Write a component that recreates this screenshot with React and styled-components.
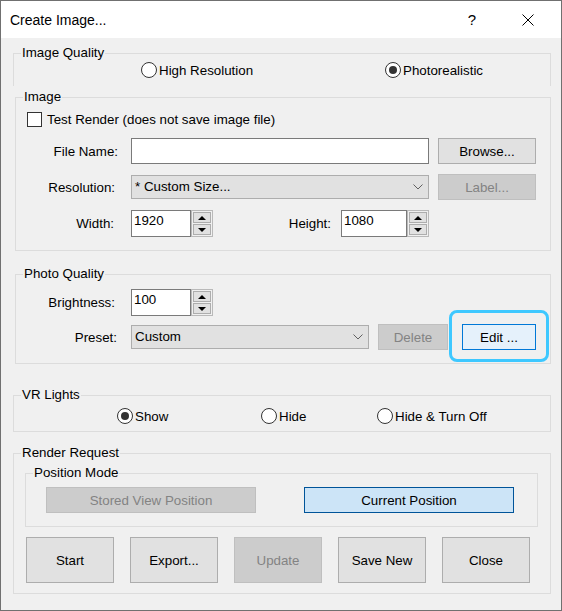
import React from 'react';
import styled, { createGlobalStyle, css } from 'styled-components';

const GlobalStyle = createGlobalStyle`
  html, body { margin: 0; padding: 0; background: #ffffff; }
  body {
    font-family: "Liberation Sans", Arial, sans-serif;
    font-size: 13.33px;
    color: #000;
  }
  * { box-sizing: border-box; }
`;

const Window = styled.div`
  width: 562px;
  height: 611px;
  border: 1px solid #707070;
  background: #f0f0f0;
  display: flex;
  flex-direction: column;
  overflow: hidden;
`;

const TitleBar = styled.div`
  height: 37px;
  flex: none;
  background: #ffffff;
  display: flex;
  align-items: center;
  padding: 0 10px 0 9px;
`;

const Title = styled.div`
  flex: 1;
  font-size: 14px;
  padding-top: 1px;
`;

const CaptionButton = styled.div`
  width: 46px;
  height: 36px;
  display: flex;
  align-items: center;
  justify-content: center;
  font-size: 15px;
  margin-left: ${p => p.$ml || 0}px;
`;

const Body = styled.div`
  flex: 1;
  display: flex;
  flex-direction: column;
  padding: 0 10px 0 12px;
`;

const Group = styled.fieldset`
  margin: ${p => p.$mt || 0}px 0 0 ${p => p.$ml || 0}px;
  padding: 0;
  min-width: 0;
  border: 1px solid #dcdcdc;
  ${p => p.$open && css`border-bottom: none;`}
`;

const Legend = styled.legend`
  margin-left: 7px;
  padding: 0 1px;
  height: 16px;
  line-height: 16px;
`;

const GroupContent = styled.div`
  display: flex;
  flex-direction: column;
  gap: ${p => p.$gap || 0}px;
  padding: ${p => p.$pad};
`;

const Row = styled.div`
  display: flex;
  align-items: center;
  height: ${p => p.$h}px;
  padding-left: ${p => p.$pl || 0}px;
`;

const FieldLabel = styled.div`
  flex: none;
  width: ${p => p.$w || 115}px;
  padding-right: ${p => p.$pr}px;
  text-align: right;
  white-space: nowrap;
`;

const RadioItem = styled.label`
  display: flex;
  align-items: center;
  height: 16px;
  width: ${p => (p.$w ? `${p.$w}px` : 'auto')};
  flex: none;
  white-space: nowrap;
`;

const RadioCircle = styled.span`
  width: 16px;
  height: 16px;
  border-radius: 50%;
  border: 1px solid #333333;
  background: #ffffff;
  display: flex;
  align-items: center;
  justify-content: center;
  flex: none;
  &::after {
    content: '';
    width: 8px;
    height: 8px;
    border-radius: 50%;
    background: ${p => (p.$checked ? '#333333' : 'transparent')};
  }
`;

const ControlText = styled.span`
  margin-left: ${p => p.$ml || 2}px;
`;

const CheckBox = styled.span`
  width: 15px;
  height: 15px;
  border: 1px solid #333333;
  background: #ffffff;
  flex: none;
`;

const TextBox = styled.div`
  width: ${p => p.$w}px;
  height: ${p => p.$h || 26}px;
  background: #ffffff;
  border: 1px solid #7a7a7a;
  padding: 2px 0 0 2px;
  line-height: 16px;
  flex: none;
`;

const Combo = styled.div`
  width: ${p => p.$w}px;
  height: 24px;
  background: #e1e1e1;
  border: 1px solid #adadad;
  display: flex;
  align-items: center;
  justify-content: space-between;
  padding: 0 5px 1px 3px;
  flex: none;
`;

const Button = styled.button`
  font: inherit;
  color: #000000;
  width: ${p => p.$w}px;
  height: ${p => p.$h || 26}px;
  margin: 0 0 0 ${p => p.$ml || 0}px;
  padding: 0;
  flex: none;
  background: #e1e1e1;
  border: 1px solid #adadad;
  position: relative;
  ${p => p.disabled && css`
    background: #cccccc;
    border-color: #bfbfbf;
    color: #838383;
  `}
  ${p => p.$selected && css`
    background: #cce4f7;
    border-color: #005499;
  `}
  ${p => p.$focused && css`
    background: #e5f1fb;
    border-color: #0078d7;
    &::after {
      content: '';
      position: absolute;
      left: -14px;
      top: -15px;
      right: -14px;
      bottom: -13px;
      border: 3px solid #3ec8ff;
      border-radius: 8px;
      pointer-events: none;
    }
  `}
`;

const SpinWrap = styled.div`
  display: flex;
  flex: none;
  height: 27px;
`;

const SpinButtons = styled.div`
  width: 22px;
  height: 27px;
  border: 1px solid #b9b9b9;
  background: #f0f0f0;
  padding: 1px;
  display: flex;
  flex-direction: column;
  gap: 1px;
`;

const SpinButton = styled.div`
  flex: 1;
  background: #e1e1e1;
  border: 1px solid #adadad;
  display: flex;
  align-items: center;
  justify-content: center;
`;

const ButtonRow = styled.div`
  display: flex;
  gap: ${p => p.$gap}px;
  padding-left: ${p => p.$pl || 0}px;
  margin-top: ${p => p.$mt || 0}px;
`;

const Chevron = () => (
  <svg width="10" height="6" viewBox="0 0 10 6">
    <path d="M0.5 0.5 L5 5 L9.5 0.5" fill="none" stroke="#606060" strokeWidth="1" />
  </svg>
);

const Triangle = ({ down }) => (
  <svg width="8" height="4" viewBox="0 0 8 4">
    {down ? <path d="M0 0 H8 L4 4 Z" fill="#000" /> : <path d="M0 4 H8 L4 0 Z" fill="#000" />}
  </svg>
);

const CloseIcon = () => (
  <svg width="12" height="12" viewBox="0 0 12 12">
    <path d="M0.5 0.5 L11.5 11.5 M11.5 0.5 L0.5 11.5" stroke="#000" strokeWidth="1" fill="none" />
  </svg>
);

const Spin = ({ value, w }) => (
  <SpinWrap>
    <TextBox $w={w} $h={27}>{value}</TextBox>
    <SpinButtons>
      <SpinButton><Triangle /></SpinButton>
      <SpinButton><Triangle down /></SpinButton>
    </SpinButtons>
  </SpinWrap>
);

const Radio = ({ label, checked, w }) => (
  <RadioItem $w={w}>
    <RadioCircle $checked={checked} />
    <ControlText>{label}</ControlText>
  </RadioItem>
);

export default function App() {
  return (
    <>
      <GlobalStyle />
      <Window>
        <TitleBar>
          <Title>Create Image...</Title>
          <CaptionButton>?</CaptionButton>
          <CaptionButton $ml={10}><CloseIcon /></CaptionButton>
        </TitleBar>
        <Body>
          <Group $mt={7} $open>
            <Legend>Image Quality</Legend>
            <GroupContent $pad="1px 0 8px 127px">
              <Row $h={16}>
                <Radio label="High Resolution" w={244} />
                <Radio label="Photorealistic" checked />
              </Row>
            </GroupContent>
          </Group>

          <Group $mt={3} $ml={2}>
            <Legend>Image</Legend>
            <GroupContent $pad="6px 0 13px 0" $gap={10}>
              <Row $h={17} $pl={11}>
                <CheckBox />
                <ControlText $ml={5}>Test Render (does not save image file)</ControlText>
              </Row>
              <Row $h={26}>
                <FieldLabel $pr={13}>File Name:</FieldLabel>
                <TextBox $w={298} />
                <Button $w={98} $ml={9}>Browse...</Button>
              </Row>
              <Row $h={26}>
                <FieldLabel $pr={16}>Resolution:</FieldLabel>
                <Combo $w={298}>
                  <span>* Custom Size...</span>
                  <Chevron />
                </Combo>
                <Button $w={98} $ml={9} disabled>Label...</Button>
              </Row>
              <Row $h={27}>
                <FieldLabel $pr={17}>Width:</FieldLabel>
                <Spin value="1920" w={60} />
                <FieldLabel $w={128} $pr={10}>Height:</FieldLabel>
                <Spin value="1080" w={66} />
              </Row>
            </GroupContent>
          </Group>

          <Group $mt={15} $ml={2}>
            <Legend>Photo Quality</Legend>
            <GroupContent $pad="7px 0 13px 0" $gap={8}>
              <Row $h={27}>
                <FieldLabel $pr={16}>Brightness:</FieldLabel>
                <Spin value="100" w={60} />
              </Row>
              <Row $h={26}>
                <FieldLabel $pr={14}>Preset:</FieldLabel>
                <Combo $w={238}>
                  <span>Custom</span>
                  <Chevron />
                </Combo>
                <Button $w={70} $ml={9} disabled>Delete</Button>
                <Button $w={74} $ml={14} $focused>Edit ...</Button>
              </Row>
            </GroupContent>
          </Group>

          <Group $mt={23}>
            <Legend>VR Lights</Legend>
            <GroupContent $pad="5px 0 7px 103px">
              <Row $h={16}>
                <Radio label="Show" checked w={144} />
                <Radio label="Hide" w={116} />
                <Radio label="Hide &amp; Turn Off" />
              </Row>
            </GroupContent>
          </Group>

          <Group $mt={13}>
            <Legend>Render Request</Legend>
            <GroupContent $pad="4px 12px 10px 11px">
              <Group>
                <Legend>Position Mode</Legend>
                <GroupContent $pad="6px 0 13px 20px">
                  <ButtonRow $gap={48}>
                    <Button $w={210} disabled>Stored View Position</Button>
                    <Button $w={210} $selected>Current Position</Button>
                  </ButtonRow>
                </GroupContent>
              </Group>
              <ButtonRow $gap={16} $pl={1} $mt={10}>
                <Button $w={88} $h={46}>Start</Button>
                <Button $w={88} $h={46}>Export...</Button>
                <Button $w={88} $h={46} disabled>Update</Button>
                <Button $w={88} $h={46}>Save New</Button>
                <Button $w={88} $h={46}>Close</Button>
              </ButtonRow>
            </GroupContent>
          </Group>
        </Body>
      </Window>
    </>
  );
}
